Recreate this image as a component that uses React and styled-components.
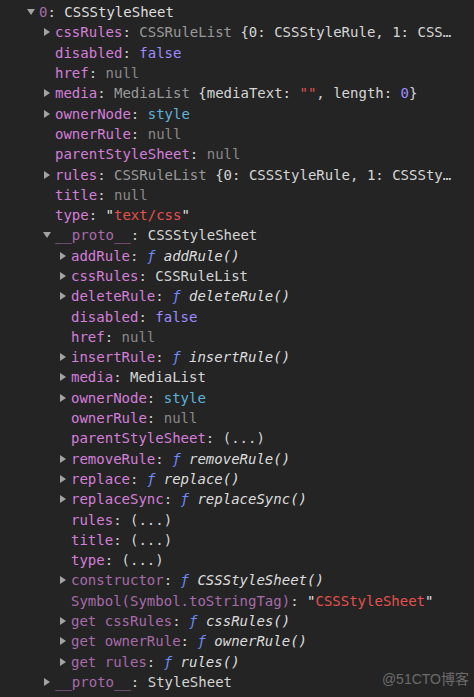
import React from "react";
import styled, {createGlobalStyle} from "styled-components";

const GlobalStyle = createGlobalStyle`
  html, body {
    margin: 0;
    padding: 0;
    background: #242424;
  }
`

// [type, text] pairs for each value
const rows = [
    {level: 0, arrow: 'down', key: '0', dim: true, value: [['obj', 'CSSStyleSheet']]},
    {level: 1, arrow: 'right', key: 'cssRules', value: [['gray', 'CSSRuleList'], ['plain', ' {0: CSSStyleRule, 1: CSS…']]},
    {level: 1, key: 'disabled', value: [['bool', 'false']]},
    {level: 1, key: 'href', value: [['null', 'null']]},
    {level: 1, arrow: 'right', key: 'media', value: [['gray', 'MediaList'], ['plain', ' {mediaText: '], ['str', '""'], ['plain', ', length: '], ['bool', '0'], ['plain', '}']]},
    {level: 1, arrow: 'right', key: 'ownerNode', value: [['node', 'style']]},
    {level: 1, key: 'ownerRule', value: [['null', 'null']]},
    {level: 1, key: 'parentStyleSheet', value: [['null', 'null']]},
    {level: 1, arrow: 'right', key: 'rules', value: [['gray', 'CSSRuleList'], ['plain', ' {0: CSSStyleRule, 1: CSSSty…']]},
    {level: 1, key: 'title', value: [['null', 'null']]},
    {level: 1, key: 'type', value: [['quote', '"'], ['str', 'text/css'], ['quote', '"']]},
    {level: 1, arrow: 'down', key: '__proto__', dim: true, value: [['plain', 'CSSStyleSheet']]},
    {level: 2, arrow: 'right', key: 'addRule', value: [['fn', 'addRule()']]},
    {level: 2, arrow: 'right', key: 'cssRules', value: [['plain', 'CSSRuleList']]},
    {level: 2, arrow: 'right', key: 'deleteRule', value: [['fn', 'deleteRule()']]},
    {level: 2, key: 'disabled', value: [['bool', 'false']]},
    {level: 2, key: 'href', value: [['null', 'null']]},
    {level: 2, arrow: 'right', key: 'insertRule', value: [['fn', 'insertRule()']]},
    {level: 2, arrow: 'right', key: 'media', value: [['plain', 'MediaList']]},
    {level: 2, arrow: 'right', key: 'ownerNode', value: [['node', 'style']]},
    {level: 2, key: 'ownerRule', value: [['null', 'null']]},
    {level: 2, key: 'parentStyleSheet', value: [['plain', '(...)']]},
    {level: 2, arrow: 'right', key: 'removeRule', value: [['fn', 'removeRule()']]},
    {level: 2, arrow: 'right', key: 'replace', value: [['fn', 'replace()']]},
    {level: 2, arrow: 'right', key: 'replaceSync', value: [['fn', 'replaceSync()']]},
    {level: 2, key: 'rules', value: [['plain', '(...)']]},
    {level: 2, key: 'title', value: [['plain', '(...)']]},
    {level: 2, key: 'type', value: [['plain', '(...)']]},
    {level: 2, arrow: 'right', key: 'constructor', dim: true, value: [['fn', 'CSSStyleSheet()']]},
    {level: 2, key: 'Symbol(Symbol.toStringTag)', dim: true, value: [['quote', '"'], ['str', 'CSSStyleSheet'], ['quote', '"']]},
    {level: 2, arrow: 'right', key: 'get cssRules', dim: true, value: [['fn', 'cssRules()']]},
    {level: 2, arrow: 'right', key: 'get ownerRule', dim: true, value: [['fn', 'ownerRule()']]},
    {level: 2, arrow: 'right', key: 'get rules', dim: true, value: [['fn', 'rules()']]},
    {level: 1, arrow: 'right', key: '__proto__', dim: true, value: [['plain', 'StyleSheet']]},
]

export default function App() {
    return <>
        <GlobalStyle/>
        <Console>
            {rows.map((r, i) =>
                <Row key={i} level={r.level}>
                    <Toggle>{r.arrow && <Arrow dir={r.arrow}/>}</Toggle>
                    <Line>
                        <Key dim={r.dim}>{r.key}</Key>
                        <Colon>: </Colon>
                        {r.value.map(([type, text], j) =>
                            type === 'fn'
                                ? <React.Fragment key={j}><FnMark>ƒ </FnMark><Value type="fn">{text}</Value></React.Fragment>
                                : <Value key={j} type={type}>{text}</Value>
                        )}
                    </Line>
                </Row>
            )}
            <Watermark>@51CTO博客</Watermark>
        </Console>
    </>
}

const colors = {
    obj: '#dedede',
    plain: '#d6d6d6',
    gray: '#9a9a9a',
    null: '#8a8a8a',
    bool: '#9d8cff',
    node: '#5fb3d9',
    str: '#e5514e',
    quote: '#e6e6e6',
    fn: '#dcdcdc',
}

const Console = styled.div`
  position: relative;
  width: 474px;
  height: 697px;
  box-sizing: border-box;
  padding-top: 2px;
  background: #242424;
  font-family: "DejaVu Sans Mono", "Liberation Mono", monospace;
  font-size: 14px;
  overflow: hidden;
`
const Row = styled.div`
  display: flex;
  align-items: center;
  height: 20.3px;
  padding-left: ${props => 27 + props.level * 16}px;
`
const Line = styled.span`
  white-space: pre;
`
const Toggle = styled.span`
  display: flex;
  align-items: center;
  width: 12px;
  flex: none;
`
const Arrow = styled.span`
  width: 0;
  height: 0;
  border-style: solid;
  border-color: transparent;
  ${props => props.dir === 'down'
          ? `border-width: 6px 4px 0 4px; border-top-color: #a3a3a3;`
          : `border-width: 4px 0 4px 6px; border-left-color: #a3a3a3; margin-left: 1px;`}
`
const Key = styled.span`
  color: ${props => props.dim ? '#a86bab' : '#d47fda'};
`
const Colon = styled.span`
  color: #cfcfcf;
`
const Value = styled.span`
  color: ${props => colors[props.type]};
  font-style: ${props => props.type === 'fn' ? 'italic' : 'normal'};
`
const FnMark = styled.span`
  color: #6f8bff;
  font-style: italic;
`
const Watermark = styled.div`
  position: absolute;
  right: 5px;
  bottom: 9px;
  font-family: "Liberation Sans", "Noto Sans CJK SC", sans-serif;
  font-size: 14px;
  color: #6c6c6c;
`
